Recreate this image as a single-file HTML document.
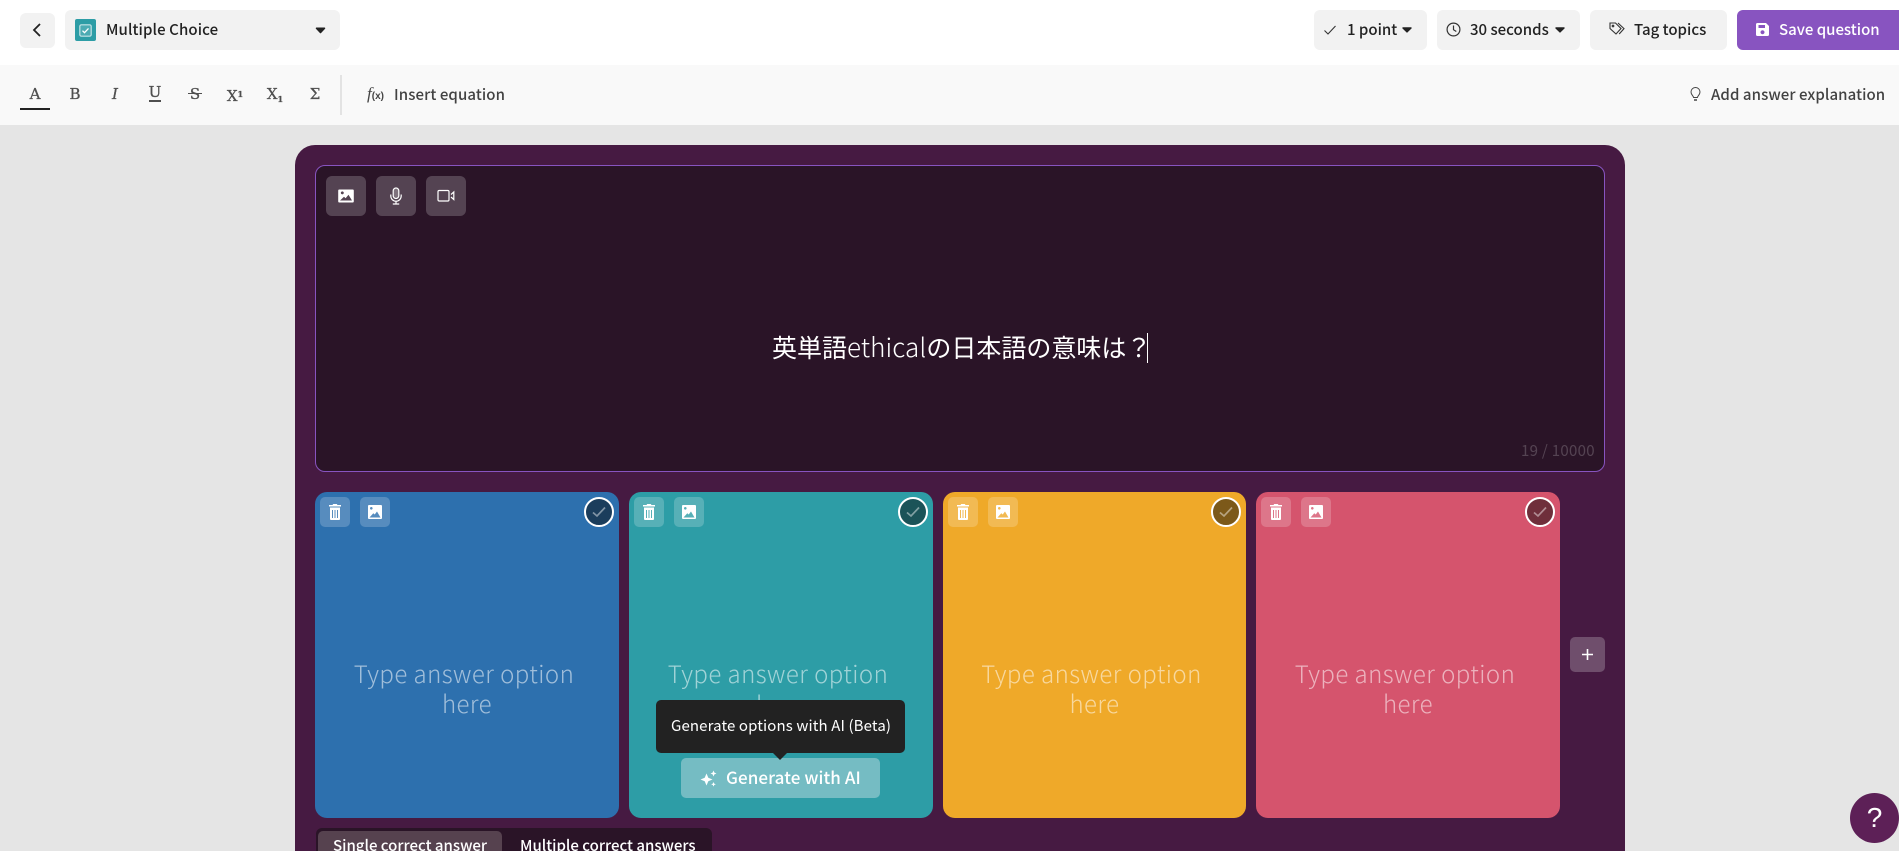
<!DOCTYPE html>
<html lang="ja"><head><meta charset="utf-8"><title>Question editor</title>
<style>
html,body{margin:0;padding:0;width:1899px;height:851px;overflow:hidden;background:#e5e5e5}
body{position:relative;font-family:"Noto Sans CJK JP","Liberation Sans",sans-serif;color:#222}
div,span,svg{position:absolute;box-sizing:border-box}
.t{white-space:nowrap;line-height:20px;height:20px;font-size:15px;font-weight:500}
.b{background:#f2f2f2;border-radius:6px}
.g{font-family:"DejaVu Serif","Liberation Serif",serif;font-size:15px;color:#4f4f4f;-webkit-text-stroke:.3px #4f4f4f;line-height:20px;width:30px;text-align:center;top:84px;font-weight:400}
.card{top:492px;height:326px;width:304px;border-radius:12px;overflow:hidden}
.ib{top:5px;width:30px;height:30px;border-radius:5px;background:rgba(255,255,255,.2)}
.ck{top:5px;left:269px;width:30px;height:30px;border-radius:50%;border:2px solid #fff;background:rgba(9,9,9,.5)}
.ph{left:0;width:100%;top:166px;text-align:center;font-size:24px;line-height:30px;font-weight:300;letter-spacing:.45px;color:rgba(255,255,255,.55)}
.ph span{position:relative;left:-3px}
.sb{top:176px;width:40px;height:40px;border-radius:6px;background:rgba(255,255,255,.2)}
</style></head><body>
<div style="left:0;top:0;width:1899px;height:65px;background:#fff"></div>
<div style="left:0;top:65px;width:1899px;height:60px;background:#f9f9f9"></div>

<div class="b" style="left:20px;top:13px;width:35px;height:35px"></div>
<svg style="left:30px;top:22px" width="14" height="16" viewBox="0 0 14 16" fill="none" stroke="#222" stroke-width="1.800"><path d="M10 2L4 8l6 6"/></svg>
<div class="b" style="left:65px;top:10px;width:275px;height:40px"></div>
<div style="left:75px;top:19px;width:21px;height:22px;background:#2d9da6;border-radius:2px"></div>
<svg style="left:79px;top:24px" width="13" height="13" viewBox="0 0 13 13" fill="none"><rect x=".8" y=".8" width="11.400" height="11.400" rx="1.500" stroke="#fff" stroke-opacity=".7" stroke-width="1.200" fill="#fff" fill-opacity=".15"/><path d="M3.500 6.700l2 2 4-4.300" stroke="#fff" stroke-width="1.300"/></svg>
<div class="t" style="left:106px;top:20px;letter-spacing:.1px">Multiple Choice</div>
<svg style="left:315px;top:27px" width="11" height="7" viewBox="0 0 11 7"><path d="M1.500 0.500h8a.8.8 0 0 1 .6 1.300l-4 4.200a.8.8 0 0 1-1.200 0l-4-4.200a.8.8 0 0 1 .6-1.300z" fill="#222"/></svg>

<div class="b" style="left:1314px;top:10px;width:113px;height:40px"></div>
<svg style="left:1323px;top:23px" width="14" height="14" viewBox="0 0 14 14" fill="none" stroke="#333" stroke-width="1.100"><path d="M1.500 7.500l3.500 3.500 7.500-8"/></svg>
<div class="t" style="left:1347px;top:20px">1 point</div>
<svg style="left:1402px;top:27px" width="10" height="6" viewBox="0 0 10 6"><path d="M1 .3h8a.7.7 0 0 1 .5 1.200L5.500 5.400a.7.7 0 0 1-1 0L.5 1.500A.7.7 0 0 1 1 .3z" fill="#222"/></svg>

<div class="b" style="left:1437px;top:10px;width:143px;height:40px"></div>
<svg style="left:1446px;top:22px" width="15" height="15" viewBox="0 0 15 15" fill="none" stroke="#333" stroke-width="1.200"><circle cx="7.500" cy="7.500" r="6.400"/><path d="M7.500 3.500v4.200l2.800 1.800"/></svg>
<div class="t" style="left:1470px;top:20px">30 seconds</div>
<svg style="left:1555px;top:27px" width="10" height="6" viewBox="0 0 10 6"><path d="M1 .3h8a.7.7 0 0 1 .5 1.200L5.500 5.400a.7.7 0 0 1-1 0L.5 1.500A.7.7 0 0 1 1 .3z" fill="#222"/></svg>

<div class="b" style="left:1590px;top:10px;width:137px;height:40px"></div>
<svg style="left:1609px;top:22px" width="16" height="14" viewBox="0 0 16 14" fill="none" stroke="#333" stroke-width="1.100"><path d="M1 1h5.500l5.500 5.500-5 5.500L1 6.500z"/><path d="M9 1l6 5.600-4.800 5.400"/><circle cx="4" cy="4" r=".8"/></svg>
<div class="t" style="left:1634px;top:20px">Tag topics</div>

<div style="left:1737px;top:10px;width:162px;height:40px;background:#8854c0;border-radius:6px 0 0 6px"></div>
<svg style="left:1756px;top:23px" width="13" height="13" viewBox="0 0 13 13"><path fill-rule="evenodd" d="M1.500 0H10l3 3v8.500A1.500 1.500 0 0 1 11.500 13h-10A1.500 1.500 0 0 1 0 11.500v-10A1.500 1.500 0 0 1 1.500 0zM2.500 2v3h6.500V2zM6.500 7.200a2 2 0 1 0 .01 0z" fill="#fff"/></svg>
<div class="t" style="left:1779px;top:20px;color:#fff">Save question</div>

<div class="g" style="left:20px">A</div>
<div style="left:20px;top:108px;width:30px;height:2px;background:#222"></div>
<div class="g" style="left:60px">B</div>
<div class="g" style="left:100px;font-style:italic">I</div>
<div class="g" style="left:140px;top:82px">U</div>
<div style="left:149px;top:100px;width:12px;height:1.500px;background:#4f4f4f"></div>
<div class="g" style="left:180px">S</div>
<div style="left:188px;top:93px;width:14px;height:1.200px;background:#4f4f4f"></div>
<div class="g" style="left:220px">X<span style="position:static;font-size:8px;font-weight:700;vertical-align:4px">1</span></div>
<div class="g" style="left:260px">X<span style="position:static;font-size:8px;font-weight:700;vertical-align:-3px">1</span></div>
<div class="g" style="left:300px">Σ</div>
<div style="left:340px;top:75px;width:2px;height:40px;background:#e3e3e3"></div>
<div style="left:367px;top:84px;font-family:'Liberation Serif',serif;font-style:italic;font-size:17px;line-height:20px;color:#444;white-space:nowrap">f<span style="position:static;font-family:'Liberation Sans',sans-serif;font-style:normal;font-size:10px;font-weight:700">(x)</span></div>
<div class="t" style="left:394px;top:85px;color:#424242;letter-spacing:.1px">Insert equation</div>
<svg style="left:1690px;top:87px" width="11" height="15" viewBox="0 0 11 15" fill="none" stroke="#444" stroke-width="1"><path d="M3.600 10.500C3.300 8.800 1 7.800 1 5A4.500 4.500 0 0 1 10 5c0 2.800-2.300 3.800-2.600 5.500z"/><path d="M4 13h3" stroke-width="1.500"/></svg>
<div class="t" style="left:1711px;top:85px;color:#424242;letter-spacing:.08px">Add answer explanation</div>

<!-- panel -->
<div style="left:295px;top:145px;width:1330px;height:706px;background:#461a42;border-radius:20px 20px 0 0"></div>
<div style="left:315px;top:165px;width:1290px;height:307px;background:#2a1427;border:1px solid #8854c0;border-radius:10px"></div>
<div class="sb" style="left:326px"></div>
<svg style="left:338px;top:189px" width="16" height="14" viewBox="0 0 16 14"><path fill-rule="evenodd" d="M1.200.5h13.600a1 1 0 0 1 1 1v11a1 1 0 0 1-1 1H1.200a1 1 0 0 1-1-1v-11a1 1 0 0 1 1-1zM4.300 2.400a1.500 1.500 0 1 0 .01 0zM2 11.500h12L10.500 5.800 7.600 9.200 6 7.800z" fill="#fff"/></svg>
<div class="sb" style="left:376px"></div>
<svg style="left:389px;top:187px" width="14" height="18" viewBox="0 0 14 18" fill="none" stroke="#fff" stroke-width="1.200"><rect x="4.200" y="1" width="5.600" height="10.500" rx="2.800" fill="#fff" fill-opacity=".25"/><path d="M1.800 7.500v1.500a5.200 5.200 0 0 0 10.400 0V7.500M7 14.500V17M3.800 17h6.400"/></svg>
<div class="sb" style="left:426px"></div>
<svg style="left:437px;top:188px" width="18" height="16" viewBox="0 0 18 16" fill="none" stroke="#fff" stroke-width="1.200"><rect x="1" y="2.500" width="11" height="10.500" rx="1.200"/><path d="M14 6.500l2.800-2.500v7.500L14 9" stroke-width="1.200"/></svg>
<div style="left:772px;top:330px;height:34px;line-height:34px;font-size:25px;font-weight:400;color:#fff;white-space:nowrap">英単語<span style="position:static;font-size:26px;font-weight:300;letter-spacing:.1px">ethical</span>の日本語の意味は？</div>
<div style="left:1147px;top:333px;width:1px;height:30px;background:#fff"></div>
<div style="left:1521px;top:441px;height:20px;line-height:20px;font-size:15px;letter-spacing:.3px;color:rgba(255,255,255,.2);white-space:nowrap">19 / 10000</div>

<!-- cards -->
<div class="card" style="left:315px;background:#2d70ae">
<div class="ib" style="left:5px"></div><svg style="left:13px;top:12px" width="14" height="16" viewBox="0 0 14 16"><path fill-rule="evenodd" d="M1 1h3.500l.7-1h3.600l.7 1H13v1.500H1zM2 3.500h10V15a1 1 0 0 1-1 1H3a1 1 0 0 1-1-1zM4 6v8h1V6zM6.500 6v8h1V6zM9 6v8h1V6z" fill="#fff"/></svg>
<div class="ib" style="left:45px"></div><svg style="left:53px;top:13px" width="14" height="14" viewBox="0 0 14 14"><path fill-rule="evenodd" d="M1 0h12a1 1 0 0 1 1 1v12a1 1 0 0 1-1 1H1a1 1 0 0 1-1-1V1a1 1 0 0 1 1-1zM3.300 2a1.300 1.300 0 1 0 .01 0zM1.500 12.500h11L9 6.500 6.700 9.500 5.300 8.200z" fill="#fff"/></svg>
<div class="ck"></div><svg style="left:276px;top:14px" width="16" height="12" viewBox="0 0 16 12" fill="none" stroke="#fff" stroke-opacity=".45" stroke-width="1.700"><path d="M2 6.500l4 3.500 8-8.500"/></svg>
<div class="ph"><span>Type answer option</span><br>here</div></div>

<div class="card" style="left:629px;background:#2d9da6">
<div class="ib" style="left:5px"></div><svg style="left:13px;top:12px" width="14" height="16" viewBox="0 0 14 16"><path fill-rule="evenodd" d="M1 1h3.500l.7-1h3.600l.7 1H13v1.500H1zM2 3.500h10V15a1 1 0 0 1-1 1H3a1 1 0 0 1-1-1zM4 6v8h1V6zM6.500 6v8h1V6zM9 6v8h1V6z" fill="#fff"/></svg>
<div class="ib" style="left:45px"></div><svg style="left:53px;top:13px" width="14" height="14" viewBox="0 0 14 14"><path fill-rule="evenodd" d="M1 0h12a1 1 0 0 1 1 1v12a1 1 0 0 1-1 1H1a1 1 0 0 1-1-1V1a1 1 0 0 1 1-1zM3.300 2a1.300 1.300 0 1 0 .01 0zM1.500 12.500h11L9 6.500 6.700 9.500 5.300 8.200z" fill="#fff"/></svg>
<div class="ck"></div><svg style="left:276px;top:14px" width="16" height="12" viewBox="0 0 16 12" fill="none" stroke="#fff" stroke-opacity=".45" stroke-width="1.700"><path d="M2 6.500l4 3.500 8-8.500"/></svg>
<div class="ph"><span>Type answer option</span><br><span style="left:0;top:1px">here</span></div></div>

<div class="card" style="left:943px;width:303px;background:#efa929">
<div class="ib" style="left:5px"></div><svg style="left:13px;top:12px" width="14" height="16" viewBox="0 0 14 16"><path fill-rule="evenodd" d="M1 1h3.500l.7-1h3.600l.7 1H13v1.500H1zM2 3.500h10V15a1 1 0 0 1-1 1H3a1 1 0 0 1-1-1zM4 6v8h1V6zM6.500 6v8h1V6zM9 6v8h1V6z" fill="#fff"/></svg>
<div class="ib" style="left:45px"></div><svg style="left:53px;top:13px" width="14" height="14" viewBox="0 0 14 14"><path fill-rule="evenodd" d="M1 0h12a1 1 0 0 1 1 1v12a1 1 0 0 1-1 1H1a1 1 0 0 1-1-1V1a1 1 0 0 1 1-1zM3.300 2a1.300 1.300 0 1 0 .01 0zM1.500 12.500h11L9 6.500 6.700 9.500 5.300 8.200z" fill="#fff"/></svg>
<div class="ck" style="left:268px"></div><svg style="left:275px;top:14px" width="16" height="12" viewBox="0 0 16 12" fill="none" stroke="#fff" stroke-opacity=".45" stroke-width="1.700"><path d="M2 6.500l4 3.500 8-8.500"/></svg>
<div class="ph"><span>Type answer option</span><br>here</div></div>

<div class="card" style="left:1256px;background:#d5546d">
<div class="ib" style="left:5px"></div><svg style="left:13px;top:12px" width="14" height="16" viewBox="0 0 14 16"><path fill-rule="evenodd" d="M1 1h3.500l.7-1h3.600l.7 1H13v1.500H1zM2 3.500h10V15a1 1 0 0 1-1 1H3a1 1 0 0 1-1-1zM4 6v8h1V6zM6.500 6v8h1V6zM9 6v8h1V6z" fill="#fff"/></svg>
<div class="ib" style="left:45px"></div><svg style="left:53px;top:13px" width="14" height="14" viewBox="0 0 14 14"><path fill-rule="evenodd" d="M1 0h12a1 1 0 0 1 1 1v12a1 1 0 0 1-1 1H1a1 1 0 0 1-1-1V1a1 1 0 0 1 1-1zM3.300 2a1.300 1.300 0 1 0 .01 0zM1.500 12.500h11L9 6.500 6.700 9.500 5.300 8.200z" fill="#fff"/></svg>
<div class="ck"></div><svg style="left:276px;top:14px" width="16" height="12" viewBox="0 0 16 12" fill="none" stroke="#fff" stroke-opacity=".45" stroke-width="1.700"><path d="M2 6.500l4 3.500 8-8.500"/></svg>
<div class="ph"><span>Type answer option</span><br>here</div></div>

<!-- generate -->
<div style="left:681px;top:758px;width:199px;height:40px;border-radius:5px;background:#75bcc3"></div>
<svg style="left:700px;top:770px" width="17" height="17" viewBox="0 0 17 17" fill="#fff"><path d="M6.500 3.500L8.300 7.700 12.500 9.500 8.300 11.300 6.500 15.500 4.700 11.300 .5 9.500 4.700 7.700z"/><path d="M13.500 .5l.9 2.100 2.100.9-2.100.9-.9 2.100-.9-2.100-2.100-.9 2.100-.9zM13.500 12l.7 1.600 1.600.7-1.600.7-.7 1.600-.7-1.600-1.600-.7 1.600-.7z"/></svg>
<div class="t" style="left:726px;top:767px;font-size:17px;color:#fff;letter-spacing:.08px">Generate with AI</div>
<div style="left:656px;top:700px;width:249px;height:53px;background:#222;border-radius:5px"></div>
<svg style="left:772px;top:752px" width="16" height="9" viewBox="0 0 16 9"><path d="M0 0h16L8 8z" fill="#222"/></svg>
<div class="t" style="left:671px;top:716px;font-size:15px;font-weight:400;color:#fff;letter-spacing:.12px">Generate options with AI (Beta)</div>

<!-- plus -->
<div style="left:1570px;top:637px;width:35px;height:35px;border-radius:5px;background:#6f4e6c"></div>
<svg style="left:1581px;top:648px" width="13" height="13" viewBox="0 0 13 13" stroke="#fff" stroke-width="1.600"><path d="M6.500 1v11M1 6.500h11"/></svg>

<!-- segmented -->
<div style="left:316px;top:828px;width:396px;height:23px;background:#2a1427;border-radius:6px 6px 0 0"></div>
<div style="left:318px;top:831px;width:184px;height:20px;background:#56424f;border-radius:5px 5px 0 0"></div>
<div class="t" style="left:333px;top:836px;height:15px;color:#fff;font-size:15px;overflow:hidden">Single correct answer</div>
<div class="t" style="left:520px;top:836px;height:15px;color:#fff;font-size:15px;overflow:hidden">Multiple correct answers</div>

<!-- help -->
<div style="left:1850px;top:793px;width:49px;height:50px;border-radius:50%;background:#5d2057"></div>
<div style="left:1850px;top:793px;width:49px;height:50px;line-height:50px;text-align:center;font-family:'Liberation Sans',sans-serif;font-size:28px;color:#fff">?</div>
</body></html>
